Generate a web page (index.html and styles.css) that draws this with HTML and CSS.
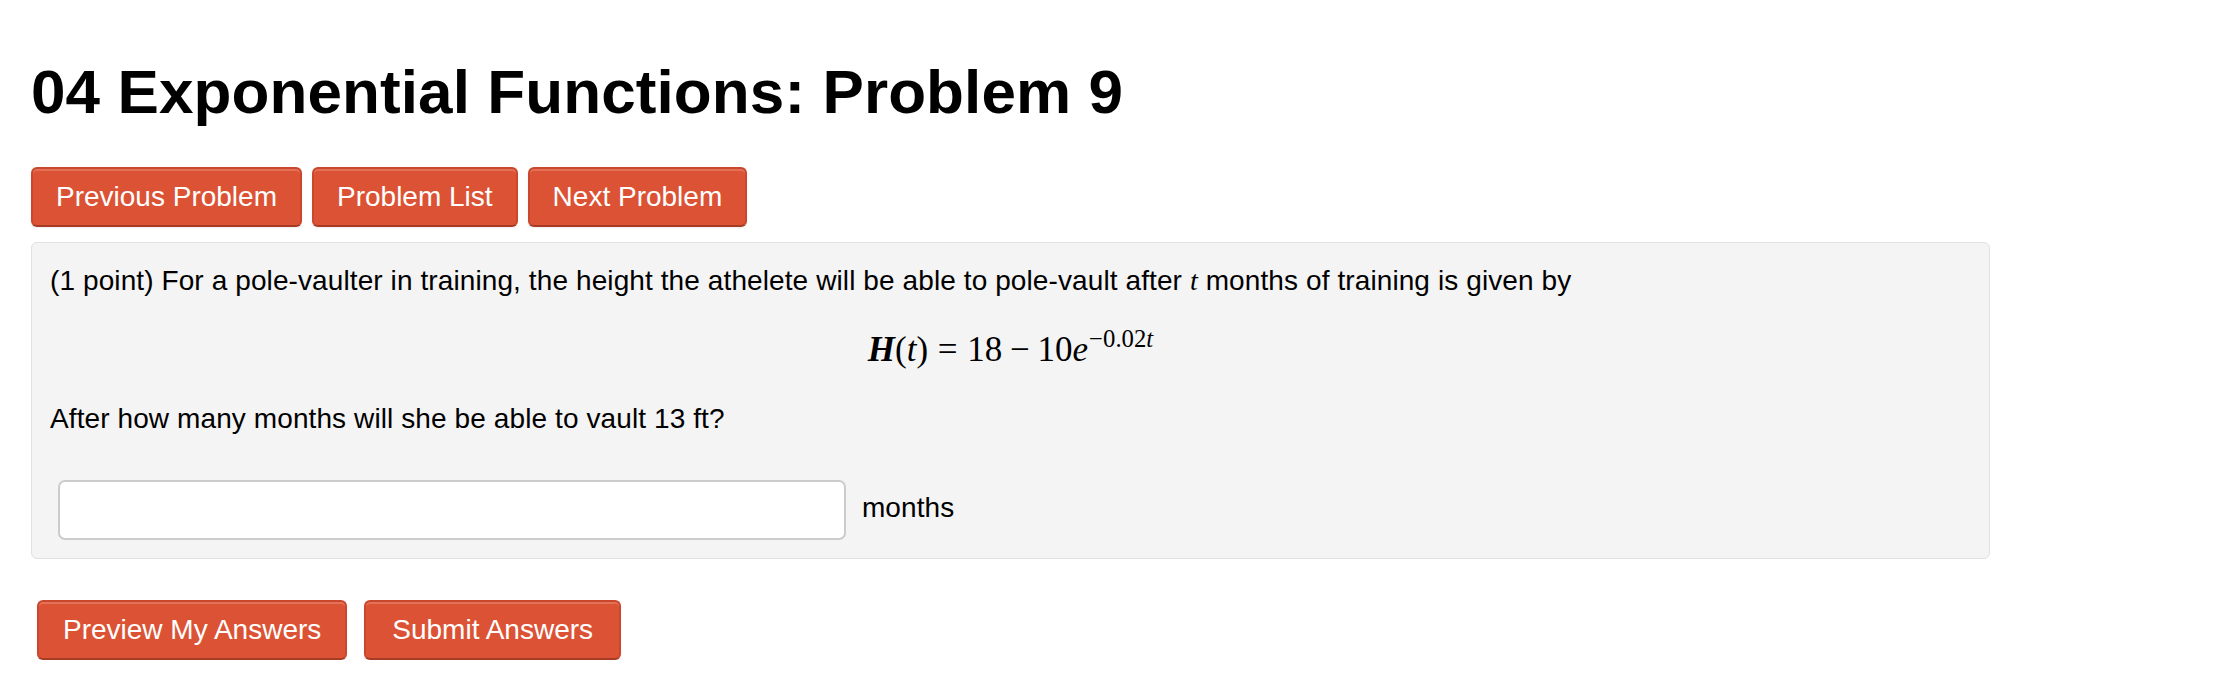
FILE: index.html
```html
<!DOCTYPE html>
<html>
<head>
    <link rel="stylesheet" href="styles.css">
</head>
<body>
    <div class="page">
        <h1>04 Exponential Functions: Problem 9</h1>

        <div class="nav-buttons">
            <button class="btn">Previous Problem</button>
            <button class="btn">Problem List</button>
            <button class="btn">Next Problem</button>
        </div>

        <div class="problem">
            <p>(1 point) For a pole-vaulter in training, the height the athelete will be able to pole-vault after <span class="math">t</span> months of training is given by</p>
            <div class="equation">
                <span class="var-big">H</span>(<span class="var">t</span>)<span class="rel">=</span>18<span class="op">&minus;</span>10<span class="var">e</span><sup>&minus;0.02<span class="var">t</span></sup>
            </div>
            <p class="question">After how many months will she be able to vault 13 ft?</p>
            <p class="answer-row"><input type="text" class="answer"> months</p>
        </div>

        <div class="submit-buttons">
            <button class="btn">Preview My Answers</button>
            <button class="btn btn-submit">Submit Answers</button>
        </div>
    </div>
</body>
</html>
```

FILE: styles.css
```css
body {
    margin: 0;
    font-family: "Liberation Sans", Arial, Helvetica, sans-serif;
    font-size: 28px;
    line-height: 40px;
    color: #000;
    background: #fff;
}

.page {
    width: 1959px;
    padding: 0 31px;
}

h1 {
    font-size: 62px;
    line-height: 69px;
    font-weight: bold;
    margin: 57px 0 41px;
    letter-spacing: 0.1px;
}

.nav-buttons {
    display: flex;
    gap: 10px;
    margin-bottom: 15px;
}

.submit-buttons {
    display: flex;
    gap: 17px;
    padding-left: 6px;
}

.btn {
    font-family: inherit;
    font-size: 28px;
    line-height: 40px;
    height: 60px;
    padding: 8px 23px;
    color: #fff;
    background-color: #dc5234;
    border: 2px solid #c9472c;
    border-bottom-color: #a83b25;
    border-radius: 6px;
    box-shadow: inset 0 2px 0 rgba(255, 255, 255, 0.18), 0 1px 2px rgba(0, 0, 0, 0.08);
    cursor: pointer;
}

.submit-buttons .btn {
    padding: 8px 24px;
}

.submit-buttons .btn-submit {
    padding: 8px 26px;
}

.btn:hover {
    background-color: #c9472c;
}

.problem {
    background-color: #f4f4f4;
    border: 1px solid #e1e1e1;
    border-radius: 6px;
    padding: 18px;
    margin-bottom: 41px;
    letter-spacing: 0.1px;
}

.problem p {
    margin: 0 0 20px;
}

.problem p.question {
    margin-bottom: 41px;
}

.problem p.answer-row {
    margin-bottom: 0;
}

.math,
.var {
    font-family: "Liberation Serif", "Times New Roman", serif;
    font-style: italic;
}

.equation {
    font-family: "Liberation Serif", "Times New Roman", serif;
    font-size: 35px;
    line-height: 58px;
    text-align: center;
    margin-bottom: 20px;
    letter-spacing: 0;
}

.var-big {
    font-style: italic;
    font-weight: bold;
}

.rel {
    margin: 0 0.278em;
}

.op {
    margin: 0 0.222em;
}

.equation sup {
    font-size: 0.707em;
    line-height: 0;
    position: relative;
    top: -14px;
    vertical-align: baseline;
    margin-left: 1px;
}

.answer {
    box-sizing: border-box;
    width: 788px;
    height: 60px;
    padding: 8px 12px;
    margin: 0 8px;
    font-family: inherit;
    font-size: 28px;
    border: 2px solid #cccccc;
    border-radius: 7px;
    background: #fff;
    vertical-align: middle;
}
```
